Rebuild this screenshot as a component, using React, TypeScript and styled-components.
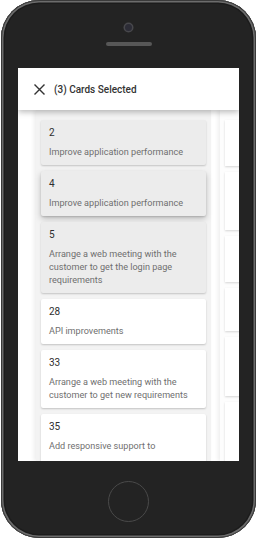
import React from "react";
import styled, { createGlobalStyle } from "styled-components";

const Global = createGlobalStyle`
  html, body { margin: 0; padding: 0; background: #ffffff; }
  body { font-family: Roboto, "Liberation Sans", Arial, sans-serif; }
`;

const Page = styled.div`
  width: 257px;
  height: 540px;
  display: flex;
  justify-content: center;
  background: #fff;
`;

const Phone = styled.div`
  width: 255px;
  height: 538px;
  border-radius: 38px;
  background: #232323;
  box-shadow: inset 0 0 0 1px #3a3a3a, inset 0 0 0 2.5px #6c6c6c, inset 0 0 0 4px #1c1c1c;
  display: flex;
  flex-direction: column;
  align-items: center;
  overflow: hidden;
`;

const TopBezel = styled.div`
  height: 68px;
  width: 100%;
  display: flex;
  flex-direction: column;
  align-items: center;
`;

const Camera = styled.div`
  margin-top: 24px;
  width: 7px;
  height: 7px;
  border-radius: 50%;
  background: #2c2c36;
  box-shadow: 0 0 0 1.5px #48484c;
`;

const Speaker = styled.div`
  margin-top: 11px;
  width: 46px;
  height: 4px;
  border-radius: 2px;
  background: #575757;
`;

const Screen = styled.div`
  width: 221px;
  height: 393px;
  background: #ffffff;
  display: flex;
  flex-direction: column;
  overflow: hidden;
`;

const Header = styled.div`
  height: 42px;
  flex: none;
  display: flex;
  align-items: center;
  padding-left: 16px;
  gap: 9px;
  background: #fff;
  box-shadow: 0 2px 6px rgba(0, 0, 0, 0.28);
  position: relative;
  z-index: 2;
`;

const Title = styled.span`
  font-size: 10px;
  font-weight: 500;
  color: #333;
`;

const Board = styled.div`
  flex: 1;
  display: flex;
  padding-left: 18px;
  gap: 9px;
  overflow: hidden;
  background: #fff;
`;

const Column = styled.div<{ $light?: boolean }>`
  flex: none;
  width: 175px;
  padding: 10px 5px 0;
  box-sizing: border-box;
  display: flex;
  flex-direction: column;
  gap: 6px;
  background: ${(p) => (p.$light ? "#fdfdfd" : "#f3f3f3")};
  box-shadow: -2px 0 4px rgba(0, 0, 0, 0.07);
`;

const Card = styled.div<{ $selected?: boolean; $lifted?: boolean; $cut?: boolean }>`
  flex: none;
  padding: 5px 8px 6px;
  min-height: ${(p) => (p.$cut ? "70px" : "0")};
  background: ${(p) => (p.$selected ? "#ececec" : "#ffffff")};
  border-radius: 2px;
  box-shadow: ${(p) =>
    p.$lifted
      ? "0 3px 6px rgba(0,0,0,0.22), 0 1px 2px rgba(0,0,0,0.15)"
      : "0 1px 2px rgba(0,0,0,0.2)"};
`;

const CardId = styled.div`
  font-size: 10px;
  line-height: 16px;
  color: #2e2e2e;
`;

const CardText = styled.div`
  margin-top: 5px;
  font-size: 9.1px;
  line-height: 13px;
  color: #6f6f6f;
`;

const GhostCard = styled.div`
  flex: none;
  background: #fff;
  box-shadow: 0 1px 2px rgba(0, 0, 0, 0.16);
`;

const BottomBezel = styled.div`
  flex: 1;
  width: 100%;
  display: flex;
  align-items: center;
  justify-content: center;
`;

const HomeButton = styled.div`
  width: 41px;
  height: 41px;
  border-radius: 50%;
  box-sizing: border-box;
  border: 1.5px solid #4a4a4a;
  margin-top: 3px;
`;

const CloseIcon = () => (
  <svg width="11" height="11" viewBox="0 0 11 11">
    <path d="M1 1 L10 10 M10 1 L1 10" stroke="#333" strokeWidth="1.4" strokeLinecap="square" />
  </svg>
);

const cards = [
  { id: "2", text: "Improve application performance", selected: true },
  { id: "4", text: "Improve application performance", selected: true, lifted: true },
  { id: "5", text: "Arrange a web meeting with the customer to get the login page requirements", selected: true },
  { id: "28", text: "API improvements" },
  { id: "33", text: "Arrange a web meeting with the customer to get new requirements" },
  { id: "35", text: "Add responsive support to", cut: true },
];

const ghostHeights = [46, 58, 46, 43, 59, 60];

export default function App() {
  return (
    <Page>
      <Global />
      <Phone>
        <TopBezel>
          <Camera />
          <Speaker />
        </TopBezel>
        <Screen>
          <Header>
            <CloseIcon />
            <Title>(3) Cards Selected</Title>
          </Header>
          <Board>
            <Column>
              {cards.map((c) => (
                <Card key={c.id} $selected={c.selected} $lifted={c.lifted} $cut={c.cut}>
                  <CardId>{c.id}</CardId>
                  <CardText>{c.text}</CardText>
                </Card>
              ))}
            </Column>
            <Column $light>
              {ghostHeights.map((h, i) => (
                <GhostCard key={i} style={{ height: h }} />
              ))}
            </Column>
          </Board>
        </Screen>
        <BottomBezel>
          <HomeButton />
        </BottomBezel>
      </Phone>
    </Page>
  );
}
